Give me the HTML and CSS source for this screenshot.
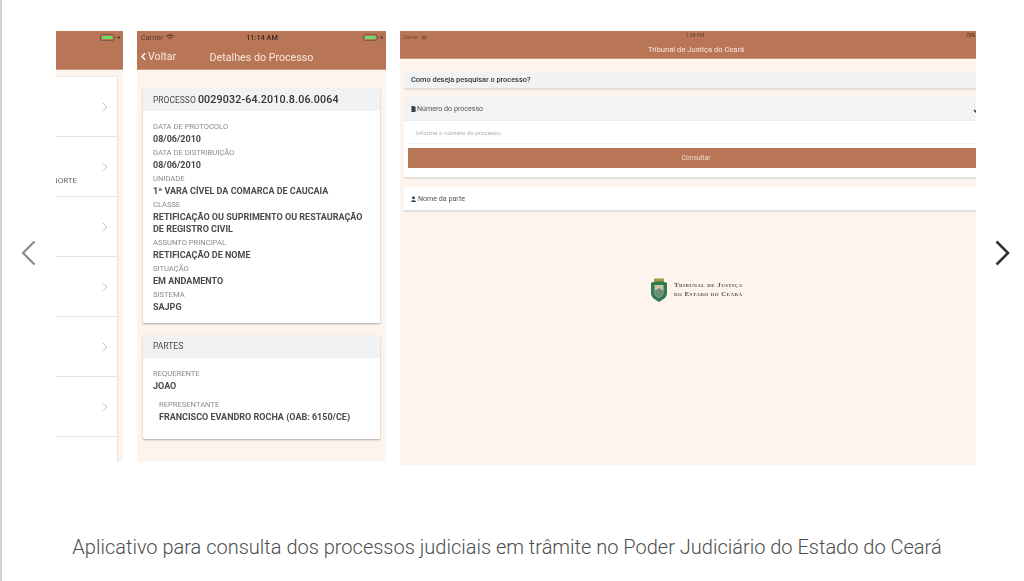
FILE: index.html
```html
<!DOCTYPE html>
<html lang="pt-BR">
<head>
    <meta charset="UTF-8">
    <title>Consulta de Processos</title>
    <link rel="stylesheet" href="styles.css">
</head>
<body>
    <div class="carousel">
        <div class="slide slide-list">
            <div class="appbar">
                <div class="status status-end">
                    <svg class="battery" viewBox="0 0 20 7"><rect x="0.5" y="0.5" width="13.500" height="6" rx="1.2" fill="none" stroke="#7d5a48"/><rect x="2" y="2" width="10.500" height="3" fill="#6fdc6a"/><rect x="14.800" y="2.500" width="1" height="2" fill="#7d5a48"/><path d="M19 0.5 17.500 4H19L18.500 6.500 20 3H18.500Z" fill="#222"/></svg>
                </div>
            </div>
            <div class="list">
                <div class="list-row"><span></span><svg class="row-arrow" viewBox="0 0 6 10"><path d="M1 1l4 4-4 4" fill="none" stroke="#c4c4c4" stroke-width="1"/></svg></div>
                <div class="list-row"><span class="row-text">NORTE</span><svg class="row-arrow" viewBox="0 0 6 10"><path d="M1 1l4 4-4 4" fill="none" stroke="#c4c4c4" stroke-width="1"/></svg></div>
                <div class="list-row"><span></span><svg class="row-arrow" viewBox="0 0 6 10"><path d="M1 1l4 4-4 4" fill="none" stroke="#c4c4c4" stroke-width="1"/></svg></div>
                <div class="list-row"><span></span><svg class="row-arrow" viewBox="0 0 6 10"><path d="M1 1l4 4-4 4" fill="none" stroke="#c4c4c4" stroke-width="1"/></svg></div>
                <div class="list-row"><span></span><svg class="row-arrow" viewBox="0 0 6 10"><path d="M1 1l4 4-4 4" fill="none" stroke="#c4c4c4" stroke-width="1"/></svg></div>
                <div class="list-row"><span></span><svg class="row-arrow" viewBox="0 0 6 10"><path d="M1 1l4 4-4 4" fill="none" stroke="#c4c4c4" stroke-width="1"/></svg></div>
            </div>
        </div>

        <div class="slide slide-detail">
            <div class="appbar">
                <div class="status status-three">
                    <span class="carrier">Carrier
                        <svg class="wifi" viewBox="0 0 10 7"><path d="M0 2.4C2.8-.5 7.2-.5 10 2.4L8.9 3.5C6.6 1.4 3.4 1.4 1.1 3.5ZM2.2 4.5C3.8 3 6.2 3 7.8 4.5L6.7 5.5C5.7 4.7 4.3 4.7 3.3 5.5ZM5 7 3.9 6C4.5 5.500 5.500 5.500 6.100 6Z" fill="#3b2a20"/></svg>
                    </span>
                    <span class="clock">11:14 AM</span>
                    <svg class="battery" viewBox="0 0 20 7"><rect x="0.5" y="0.5" width="13.500" height="6" rx="1.2" fill="none" stroke="#7d5a48"/><rect x="2" y="2" width="10.500" height="3" fill="#6fdc6a"/><rect x="14.800" y="2.500" width="1" height="2" fill="#7d5a48"/><path d="M19 0.5 17.500 4H19L18.500 6.500 20 3H18.500Z" fill="#222"/></svg>
                </div>
                <div class="navbar">
                    <span class="back"><svg class="back-arrow" viewBox="0 0 6 10"><path d="M5 1 1 5l4 4" fill="none" stroke="#fff" stroke-width="1.6"/></svg>Voltar</span>
                    <span class="nav-title">Detalhes do Processo</span>
                </div>
            </div>
            <div class="detail-body">
                <div class="card">
                    <div class="card-head">PROCESSO <b>0029032-64.2010.8.06.0064</b></div>
                    <div class="card-body">
                        <div class="field"><span>DATA DE PROTOCOLO</span><b>08/06/2010</b></div>
                        <div class="field"><span>DATA DE DISTRIBUIÇÃO</span><b>08/06/2010</b></div>
                        <div class="field"><span>UNIDADE</span><b>1ª VARA CÍVEL DA COMARCA DE CAUCAIA</b></div>
                        <div class="field"><span>CLASSE</span><b>RETIFICAÇÃO OU SUPRIMENTO OU RESTAURAÇÃO DE REGISTRO CIVIL</b></div>
                        <div class="field"><span>ASSUNTO PRINCIPAL</span><b>RETIFICAÇÃO DE NOME</b></div>
                        <div class="field"><span>SITUAÇÃO</span><b>EM ANDAMENTO</b></div>
                        <div class="field"><span>SISTEMA</span><b>SAJPG</b></div>
                    </div>
                </div>
                <div class="card card-parts">
                    <div class="card-head">PARTES</div>
                    <div class="card-body">
                        <div class="field"><span>REQUERENTE</span><b>JOAO</b></div>
                        <div class="field field-sub"><span>REPRESENTANTE</span><b>FRANCISCO EVANDRO ROCHA (OAB: 6150/CE)</b></div>
                    </div>
                </div>
            </div>
        </div>

        <div class="slide slide-search">
            <div class="search-inner">
                <div class="appbar appbar-wide">
                    <div class="wide-status">
                        <span class="carrier">Carrier
                            <svg class="wifi" viewBox="0 0 10 7"><path d="M0 2.4C2.8-.5 7.2-.5 10 2.4L8.9 3.500C6.600 1.400 3.400 1.400 1.100 3.500ZM2.200 4.500C3.800 3 6.200 3 7.800 4.500L6.700 5.500C5.700 4.700 4.300 4.700 3.300 5.500ZM5 7 3.900 6C4.500 5.500 5.500 5.500 6.100 6Z" fill="#3b2a20"/></svg>
                        </span>
                        <span class="wide-clock">1:34 PM</span>
                        <span class="wide-level">70%</span>
                    </div>
                    <div class="wide-title">Tribunal de Justiça do Ceará</div>
                </div>
                <div class="search-body">
                    <div class="question">Como deseja pesquisar o processo?</div>
                    <div class="panel">
                        <div class="panel-head">
                            <svg class="small-icon" viewBox="0 0 6 7"><path d="M.5 0H4L5.500 1.500V7H.5Z" fill="#444"/></svg>
                            <span>Número do processo</span>
                            <svg class="panel-caret" viewBox="0 0 8 5"><path d="M1 1l3 3 3-3" fill="none" stroke="#222" stroke-width="1.300"/></svg>
                        </div>
                        <div class="panel-input">Informe o número do processo</div>
                        <div class="panel-button">Consultar</div>
                    </div>
                    <div class="panel panel-name">
                        <svg class="small-icon" viewBox="0 0 6 7"><circle cx="3" cy="2" r="1.800" fill="#444"/><path d="M0 7C0 4.500 6 4.500 6 7Z" fill="#444"/></svg>
                        <span>Nome da parte</span>
                    </div>
                    <div class="seal">
                        <svg class="seal-shield" viewBox="0 0 18 24">
                            <rect x="4" y="0.500" width="10" height="3.500" fill="#a8963f"/>
                            <path d="M1 5C3 3 15 3 17 5V15C17 20 12 22 9 24 6 22 1 20 1 15Z" fill="#2f7a55"/>
                            <path d="M4.500 7H13.500V15C13.500 18 10.500 19 9 20 7.500 19 4.500 18 4.500 15Z" fill="#c9c4a0"/>
                            <path d="M4.500 13 9 10 13.500 13V15C13.500 18 10.500 19 9 20 7.500 19 4.500 18 4.500 15Z" fill="#6d8f78"/>
                        </svg>
                        <div class="seal-text">
                            <span>Tribunal de Justiça</span>
                            <span>do Estado do Ceará</span>
                        </div>
                    </div>
                </div>
            </div>
        </div>

        <svg class="arrow arrow-prev" viewBox="0 0 15 26"><path d="M13.500 1.500 2 13l11.500 11.500" fill="none" stroke="#8b8b8b" stroke-width="2.200"/></svg>
        <svg class="arrow arrow-next" viewBox="0 0 15 26"><path d="M1.500 1.500 13 13 1.500 24.500" fill="none" stroke="#333" stroke-width="2.600"/></svg>
    </div>
    <p class="caption">Aplicativo para consulta dos processos judiciais em trâmite no Poder Judiciário do Estado do Ceará</p>
</body>
</html>
```

FILE: styles.css
```css
html, body {
    height: 100%;
}
body {
    margin: 0;
    overflow: hidden;
    background-color: #fff;
    border-left: 2px solid #d2d2d2;
    font-family: Roboto, "Liberation Sans", sans-serif;
    color: #3f3f3f;
}

.carousel {
    position: relative;
    display: flex;
    align-items: flex-start;
    gap: 14px;
    padding: 31px 0 0 54px;
    height: 434px;
}
.slide {
    flex-shrink: 0;
    overflow: hidden;
    background-color: #fdf4ed;
    height: 431px;
    filter: blur(.35px);
}
.slide-list {
    width: 67px;
}
.slide-detail {
    width: 249px;
}
.slide-search {
    width: 576px;
    height: 434px;
}

.appbar {
    height: 38px;
    background-color: #b97657;
    border-bottom: 1px solid #d09a80;
    box-sizing: content-box;
}
.status {
    height: 12px;
    padding: 0 3px 0 4px;
    font-size: 7.300px;
    color: #3b2a20;
}
.status-end {
    display: flex;
    align-items: center;
    justify-content: flex-end;
}
.status-three {
    display: grid;
    grid-template-columns: 1fr auto 1fr;
    align-items: center;
}
.status-three .battery {
    justify-self: end;
}
.battery {
    width: 20px;
    height: 7px;
}
.carrier {
    display: flex;
    align-items: center;
    gap: 3px;
    opacity: .8;
}
.wifi {
    width: 8px;
    height: 6px;
}
.clock {
    font-weight: 500;
}
.navbar {
    position: relative;
    display: flex;
    align-items: center;
    justify-content: center;
    height: 26px;
    font-size: 10.700px;
    color: #f7e7dc;
}
.back {
    position: absolute;
    left: 4px;
    top: 7px;
    display: flex;
    align-items: center;
    gap: 2px;
}
.back-arrow {
    width: 5px;
    height: 9px;
}
.nav-title {
    padding-top: 3px;
}

.list {
    margin: 6px 0 0 -100px;
    width: 161px;
    background-color: #fff;
    border-top: 1px solid #eeeae6;
    border-right: 1px solid #e6e4e1;
    height: 400px;
}
.list-row {
    display: flex;
    align-items: center;
    justify-content: space-between;
    box-sizing: border-box;
    height: 60px;
    padding: 0 9px 0 96px;
    border-bottom: 1px solid #e4e4e4;
}
.row-text {
    padding-top: 28px;
    font-size: 8px;
    color: #666;
}
.row-arrow {
    width: 6px;
    height: 10px;
}

.detail-body {
    padding: 18px 6px 0;
}
.card {
    background-color: #fff;
    box-shadow: 0 1px 2px rgba(90, 80, 70, .45);
    border-radius: 1px;
}
.card-parts {
    margin-top: 12px;
}
.card-head {
    height: 23px;
    line-height: 23px;
    padding-left: 10px;
    background-color: #f2f2f2;
    font-size: 8.500px;
    color: #4a4a4a;
}
.card-head b {
    font-size: 10.700px;
    font-weight: 500;
    letter-spacing: .15px;
    color: #333;
}
.card-body {
    padding: 10px 10px 8px;
}
.card-parts .card-body {
    padding-bottom: 14px;
}
.field {
    display: flex;
    flex-direction: column;
}
.field span {
    height: 12px;
    line-height: 12px;
    font-size: 7.600px;
    color: #8a8a8a;
}
.field b {
    line-height: 11.500px;
    padding: 1px 6px 1.500px 0;
    font-size: 9px;
    font-weight: 700;
    color: #4a4a4a;
}
.field-sub {
    margin: 5px 0 0 6px;
}
.field-sub b {
    padding-right: 0;
}

.search-inner {
    width: 592px;
}
.appbar-wide {
    height: 27px;
}
.wide-status {
    position: relative;
    display: flex;
    justify-content: space-between;
    height: 11px;
    padding: 1px 3px 0;
    font-size: 5px;
    line-height: 7px;
    color: #5a3c2c;
}
.wide-status .wifi {
    width: 6px;
    height: 4px;
}
.wide-clock {
    position: absolute;
    left: 286px;
}
.wide-level {
    padding-right: 14px;
    font-style: italic;
    color: #2c2018;
}
.wide-title {
    text-align: center;
    font-size: 7.600px;
    line-height: 14px;
    color: #f7e7dc;
}
.search-body {
    padding: 12px 4px 0;
}
.question {
    height: 17px;
    line-height: 17px;
    padding-left: 7px;
    background-color: #f2f2f2;
    border-bottom: 2px solid #e3dfda;
    font-size: 7.400px;
    font-weight: 500;
    color: #333;
}
.panel {
    margin-top: 7px;
    background-color: #fff;
    border-bottom: 2px solid #e3dfda;
    font-size: 7.100px;
    color: #555;
}
.panel-head {
    display: flex;
    align-items: center;
    gap: 1px;
    height: 24px;
    padding: 0 7px;
    background-color: #f3f3f3;
    border-bottom: 1px solid #ececec;
    box-sizing: border-box;
}
.small-icon {
    width: 5px;
    height: 6px;
}
.panel-caret {
    width: 8px;
    height: 5px;
    margin: 5px 0 0 auto;
}
.panel-head span {
    flex: none;
}
.panel-input {
    height: 22px;
    line-height: 25px;
    margin: 0 0 0 4px;
    padding-left: 8px;
    border-bottom: 1px solid #f0f0f0;
    font-size: 6.200px;
    color: #b0b0b0;
}
.panel-button {
    margin: 4px 4px 9px;
    height: 20px;
    line-height: 20px;
    text-align: center;
    background-color: #b97657;
    font-size: 6.800px;
    color: #f0d9cb;
}
.panel-name {
    display: flex;
    align-items: center;
    gap: 2px;
    margin-top: 8px;
    height: 23px;
    padding-left: 7px;
}
.seal {
    display: flex;
    align-items: center;
    gap: 6px;
    margin: 66px 0 0 246px;
}
.seal-shield {
    width: 18px;
    height: 24px;
}
.seal-text {
    display: flex;
    flex-direction: column;
    font-family: "Liberation Serif", serif;
    font-variant: small-caps;
    font-size: 7px;
    font-weight: 700;
    line-height: 9px;
    letter-spacing: .42px;
    color: #555;
}

.arrow {
    position: absolute;
    top: 240px;
    width: 15px;
    height: 26px;
}
.arrow-prev {
    left: 19px;
}
.arrow-next {
    left: 993px;
}

.caption {
    margin: 70px 0 0;
    padding-right: 12px;
    text-align: center;
    font-size: 20px;
    font-weight: 300;
    line-height: 24px;
    color: #4d4d4d;
}
```
